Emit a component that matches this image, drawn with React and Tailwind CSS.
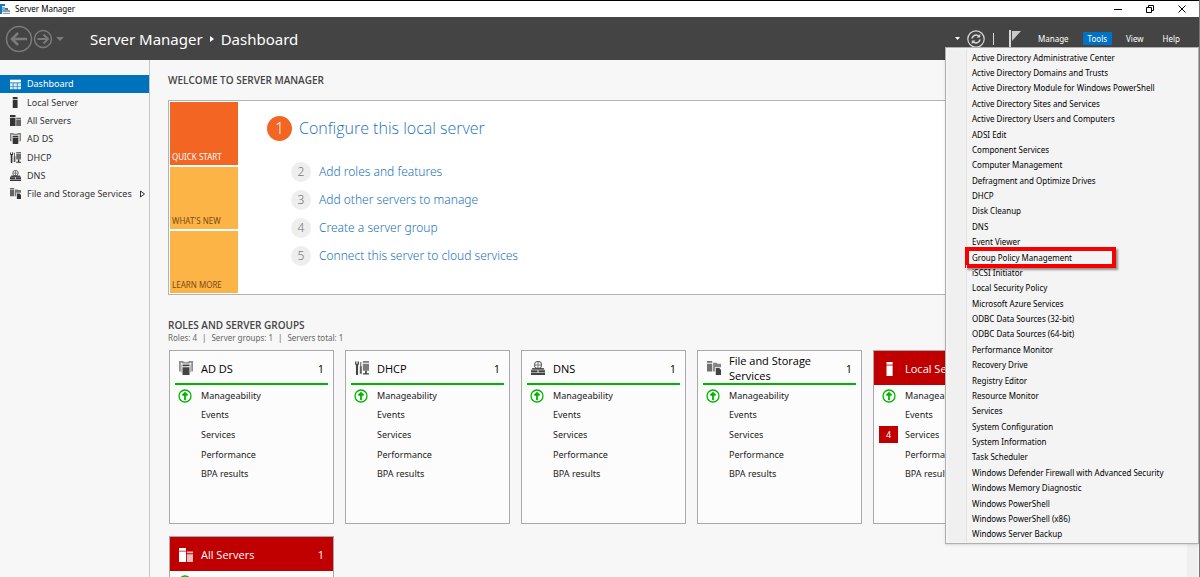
import React from "react";

const tools = [
  "Active Directory Administrative Center",
  "Active Directory Domains and Trusts",
  "Active Directory Module for Windows PowerShell",
  "Active Directory Sites and Services",
  "Active Directory Users and Computers",
  "ADSI Edit",
  "Component Services",
  "Computer Management",
  "Defragment and Optimize Drives",
  "DHCP",
  "Disk Cleanup",
  "DNS",
  "Event Viewer",
  "Group Policy Management",
  "iSCSI Initiator",
  "Local Security Policy",
  "Microsoft Azure Services",
  "ODBC Data Sources (32-bit)",
  "ODBC Data Sources (64-bit)",
  "Performance Monitor",
  "Recovery Drive",
  "Registry Editor",
  "Resource Monitor",
  "Services",
  "System Configuration",
  "System Information",
  "Task Scheduler",
  "Windows Defender Firewall with Advanced Security",
  "Windows Memory Diagnostic",
  "Windows PowerShell",
  "Windows PowerShell (x86)",
  "Windows Server Backup",
];

const shapes = {
  dashboard: (
    <>
      <path d="M0 1h16v4H0z" />
      <path d="M0 6h4v4H0zM5 6h5v4H5zM11 6h5v4h-5zM0 11h4v4H0zM5 11h5v4H5zM11 11h5v4h-5z" opacity=".85" />
    </>
  ),
  server: (
    <>
      <path d="M4 0h7v3H4z" />
      <path d="M4 4h7v12H4z" />
    </>
  ),
  servers: (
    <>
      <path d="M0 0h8v3H0zM0 4h8v12H0z" />
      <path d="M9 4h7v2H9zM9 7h7v9H9z" opacity=".75" />
    </>
  ),
  adds: (
    <>
      <path d="M0 0h5v2H2v10H0zM16 0h-5v2h3v10h2z" opacity=".6" />
      <path d="M2.500 4h1v9h-1zM12.500 4h1v9h-1z" opacity=".4" />
      <path d="M4 1h8v2H4z" opacity=".55" />
      <path d="M4 4h8v2H4zM4 7h8v9H4z" />
    </>
  ),
  dhcp: (
    <>
      <path d="M1.500 0v3h1.500V0C4.500.5 5 2 4.500 3.500L3.500 5v10a1.200 1.200 0 0 1-2.400 0V5L.2 3.500C-.3 2 .2.5 1.500 0z" />
      <path d="M6 1h1.200v5h.6v8.500H5.500V6H6z" opacity=".85" />
      <path d="M9 0h7v2H9zM9 3h7v8H9z" opacity=".7" />
      <path d="M11.500 11h2v3H16v1.500H9V14h2.500z" />
    </>
  ),
  dns: (
    <>
      <circle cx="8" cy="4.500" r="4" fill="none" stroke="currentColor" strokeWidth="1.300" opacity=".8" />
      <path d="M4.500 4h7v1h-7zM7.400 1h1.200v7H7.400z" opacity=".7" />
      <path d="M1.500 8h13l1 2H.5z" opacity=".9" />
      <path d="M0 10.500h7.500V13H0zM8.500 10.500H16V13H8.500zM0 13.700h16V16H0z" />
    </>
  ),
  files: (
    <>
      <path d="M0 0h6v2H0zM0 3h6v9H0z" opacity=".75" />
      <path d="M7 2h4l1 1h4v4H9v5H7z" opacity=".65" />
      <path d="M10 8h4l2 2v6h-6z" />
    </>
  ),
};

function Icon({ name, className }) {
  return (
    <svg viewBox="0 0 16 16" fill="currentColor" aria-hidden="true" className={"shrink-0 " + className}>
      {shapes[name]}
    </svg>
  );
}

const nav = [
  ["Dashboard", "dashboard"],
  ["Local Server", "server"],
  ["All Servers", "servers"],
  ["AD DS", "adds"],
  ["DHCP", "dhcp"],
  ["DNS", "dns"],
  ["File and Storage Services", "files"],
];

const cards = [
  { title: "AD DS", icon: "adds" },
  { title: "DHCP", icon: "dhcp" },
  { title: "DNS", icon: "dns" },
  { title: "File and Storage Services", icon: "files" },
  { title: "Local Server", icon: "server", alert: 4 },
  { title: "All Servers", icon: "servers", alert: 4 },
];

function TitleBar() {
  return (
    <div className="flex h-[17px] shrink-0 items-center border-t border-black bg-white text-black">
      <svg viewBox="0 0 11 11" className="size-[11px]" aria-hidden="true">
        <path d="M0 0h5v2H2v8H0z" fill="#1779ba" />
        <path d="M2 3h3v5H2z" fill="#7fb7dc" />
        <path d="M3 6h7v4H3z" fill="#8d9fae" />
        <path d="M5 4h3v2H5z" fill="#5c7488" />
        <path d="M3 8h7v1H3z" fill="#e6edf2" />
      </svg>
      <span className="ml-1 flex-1 text-[8px] leading-4">Server Manager</span>
      <div className="mr-[13px] flex items-center gap-6">
        <button aria-label="Minimize">
          <svg viewBox="0 0 8 8" className="size-2" stroke="#000" fill="none"><path d="M0 4.500h8" /></svg>
        </button>
        <button aria-label="Restore">
          <svg viewBox="0 0 8 8" className="size-2" stroke="#000" fill="none"><path d="M.5 2.500h5v5h-5zM2.500 2.500v-2h5v5h-2" /></svg>
        </button>
        <button aria-label="Close">
          <svg viewBox="0 0 8 8" className="size-2" stroke="#000" fill="none"><path d="M.5.5l7 7M7.500.5l-7 7" /></svg>
        </button>
      </div>
    </div>
  );
}

function Header() {
  return (
    <header className="flex h-[43px] shrink-0 items-center bg-[#444444] text-white">
      <button aria-label="Back" className="ml-[5px]">
        <svg viewBox="0 0 28 28" className="size-7" fill="none" stroke="#7b7b7b" strokeWidth="2">
          <circle cx="14" cy="14" r="12.500" strokeWidth="1.500" />
          <path d="M22 14H7M13 8l-6 6 6 6" strokeWidth="2.500" />
        </svg>
      </button>
      <button aria-label="Forward">
        <svg viewBox="0 0 20 20" className="size-5" fill="none" stroke="#7b7b7b" strokeWidth="2">
          <circle cx="10" cy="10" r="8.500" strokeWidth="1.500" />
          <path d="M4.500 10h10M10.500 5.500L15 10l-4.500 4.500" />
        </svg>
      </button>
      <button aria-label="History" className="ml-[3px]">
        <svg viewBox="0 0 8 4" className="h-1 w-2" fill="#7b7b7b"><path d="M0 0h8L4 4z" /></svg>
      </button>
      <nav aria-label="Breadcrumb" className="ml-[26px] flex flex-1 items-center gap-[7px] text-[15px] leading-5">
        <a href="#root">Server Manager</a>
        <svg viewBox="0 0 4 6" className="h-[6px] w-1" fill="#fff" aria-hidden="true"><path d="M0 0l4 3-4 3z" /></svg>
        <a href="#dashboard">Dashboard</a>
      </nav>
      <button aria-label="Refresh options">
        <svg viewBox="0 0 5 3" className="h-[3px] w-[5px]" fill="#fff"><path d="M0 0h5L2.500 3z" /></svg>
      </button>
      <button aria-label="Refresh" className="ml-[7px]">
        <svg viewBox="0 0 18 18" className="size-[18px]" fill="none" stroke="#d8d8d8">
          <circle cx="9" cy="9" r="8.200" strokeWidth="1.200" />
          <path d="M5 8.500A4 4 0 0 1 12 6.500M13 9.500A4 4 0 0 1 6 11.500" strokeWidth="1.600" />
          <path d="M13.200 4v3.600H9.600zM4.800 14v-3.600h3.600z" fill="#d8d8d8" stroke="none" />
        </svg>
      </button>
      <span className="ml-2 h-3 w-px bg-[#d8d8d8]" />
      <button aria-label="Notifications" className="ml-[15px]">
        <svg viewBox="0 0 12 18" className="h-[18px] w-3" fill="#d8d8d8"><path d="M0 0h2v18H0z" /><path d="M3 1h9L3 11z" opacity=".9" /></svg>
      </button>
      <div className="mr-[14px] ml-3 flex items-center gap-[9px] text-[8px] leading-3">
        <button className="px-[5px]">Manage</button>
        <button className="h-[13px] bg-[#0072c6] px-[5px]">Tools</button>
        <button className="px-[5px]">View</button>
        <button className="px-[5px]">Help</button>
      </div>
    </header>
  );
}

function Sidebar() {
  return (
    <nav aria-label="Servers" className="w-[150px] shrink-0 border-r border-[#c3c3c3] pt-[15px] text-[9px] text-[#333333]">
      <div className="grid h-[128px] auto-rows-fr">
        {nav.map(([label, icon], i) => (
          <a
            key={label}
            href="#dashboard"
            className={i === 0 ? "flex items-center bg-[#0072bc] pl-[10px] text-white" : "flex items-center pl-[10px]"}
          >
            <Icon name={icon} className="size-[11px]" />
            <span className="ml-[6px] flex-1 whitespace-nowrap">{label}</span>
            {icon === "files" && (
              <svg viewBox="0 0 5 8" className="mr-1 h-2 w-[5px]" fill="none" stroke="#333" aria-hidden="true"><path d="M.5 1L4.500 4 .5 7z" /></svg>
            )}
          </a>
        ))}
      </div>
    </nav>
  );
}

function Welcome() {
  return (
    <section className="flex border border-[#b0b4b8] bg-white p-px">
      <div className="flex w-[68px] flex-col gap-[2px] text-[8px] leading-3 text-[#7a4a10]">
        <button className="flex h-[63px] items-end bg-[#f26522] px-[2px] pb-[2px] text-white">QUICK START</button>
        <button className="flex h-[62px] items-end bg-[#fdb447] px-[2px] pb-[2px]">WHAT'S NEW</button>
        <button className="flex h-[62px] items-end bg-[#fdb447] px-[2px] pb-[2px]">LEARN MORE</button>
      </div>
      <div className="pt-[14px] pl-[29px] font-light text-[#1c73b9]">
        <a href="#configure" className="flex items-center gap-[7px] font-['Open_Sans',sans-serif] text-[16px] leading-[25px]">
          <span className="flex size-[25px] items-center justify-center rounded-full bg-[#f26522] text-white">1</span>
          Configure this local server
        </a>
        <ol className="mt-[21px] ml-6 flex flex-col gap-2 text-[12px] leading-5">
          {["Add roles and features", "Add other servers to manage", "Create a server group", "Connect this server to cloud services"].map((t, i) => (
            <li key={t}>
              <a href="#step" className="flex items-center gap-2">
                <span className="flex size-5 items-center justify-center rounded-full bg-[#eeeeee] text-[#777777]">{i + 2}</span>
                {t}
              </a>
            </li>
          ))}
        </ol>
      </div>
    </section>
  );
}

function Card({ title, icon, alert }) {
  return (
    <article className="flex h-[174px] w-[165px] flex-col border border-[#a9a9a9] bg-[#fcfcfc]">
      <div
        className={
          alert
            ? "flex h-[34px] shrink-0 bg-[#c00000] px-[5px] text-white"
            : "flex h-[34px] shrink-0 px-[5px] text-black"
        }
      >
        <div
          className={
            alert
              ? "flex flex-1 items-center px-1 pt-px font-['Open_Sans',sans-serif] text-[11px] leading-[15px]"
              : "flex flex-1 items-center border-b-2 border-[#00b400] px-1 pt-[2px] font-['Open_Sans',sans-serif] text-[11px] leading-[15px]"
          }
        >
          <Icon name={icon} className={alert ? "size-[14px]" : "size-[14px] text-[#444444]"} />
          <h3 className="mr-3 ml-2 flex-1">{title}</h3>
          <span>1</span>
        </div>
      </div>
      <ul className="mt-px grid h-[98px] auto-rows-fr pl-[5px] text-[9px] leading-4 text-[#222222]">
        {["Manageability", "Events", "Services", "Performance", "BPA results"].map((row) => (
          <li key={row} className="flex items-center">
            <span className="mr-[7px] flex w-[19px] justify-center">
              {row === "Manageability" && (
                <svg viewBox="0 0 14 14" className="size-[14px]" fill="none" stroke="#00b400" aria-hidden="true">
                  <circle cx="7" cy="7" r="6" strokeWidth="1.300" />
                  <path d="M7 11V4.500M4.500 6.500L7 4l2.500 2.500" strokeWidth="1.800" />
                </svg>
              )}
              {row === "Services" && alert && (
                <span className="flex h-[17px] w-[19px] items-center justify-center bg-[#c00000] text-white">{alert}</span>
              )}
            </span>
            <a href="#detail">{row}</a>
          </li>
        ))}
      </ul>
    </article>
  );
}

function ToolsMenu() {
  return (
    <div className="absolute top-[47px] right-0 w-[254px] border border-[#b0b0b0] bg-[#f4f4f4] px-[2px] pt-[2px] pb-px shadow-sm">
      <ul role="menu" className="grid h-[492px] auto-rows-fr border-l-[18px] border-[#f0f0f0] text-[8px] leading-3 text-black">
        {tools.map((t) => (
          <li key={t} role="none" className="relative flex items-center border-l border-[#e2e2e2] pl-[5px]">
            <button role="menuitem" className="whitespace-nowrap">{t}</button>
            {t === "Group Policy Management" && (
              <span className="pointer-events-none absolute -top-[3px] -left-[2px] h-[21px] w-[151px] border-4 border-[#f80000] shadow-[2px_2px_2px_rgba(0,0,0,0.4)]" />
            )}
          </li>
        ))}
      </ul>
    </div>
  );
}

export default function App() {
  return (
    <div className="relative flex h-screen flex-col overflow-hidden border-r border-[#777777] bg-[#f7f7f7] font-['Noto_Sans','Open_Sans',sans-serif]">
      <TitleBar />
      <Header />
      <div className="flex min-h-0 flex-1">
        <Sidebar />
        <main className="min-w-0 flex-1 overflow-hidden pl-[18px]">
          <h1 className="mt-[14px] font-['Open_Sans',sans-serif] text-[10px] leading-3 font-semibold text-[#444444]">WELCOME TO SERVER MANAGER</h1>
          <div className="mt-[14px]">
            <Welcome />
          </div>
          <h2 className="mt-6 font-['Open_Sans',sans-serif] text-[10px] leading-3 font-semibold text-[#444444]">ROLES AND SERVER GROUPS</h2>
          <p className="flex gap-[5px] text-[8px] leading-[14px] text-[#666666]">
            <span>Roles: 4</span>
            <span>|</span>
            <span>Server groups: 1</span>
            <span>|</span>
            <span>Servers total: 1</span>
          </p>
          <div className="mt-[5px] ml-px flex flex-wrap gap-x-[11px] gap-y-3">
            {cards.map((c) => (
              <Card key={c.title} {...c} />
            ))}
          </div>
        </main>
        <div className="mr-px w-[11px] shrink-0 bg-[#efefef]" />
      </div>
      <ToolsMenu />
    </div>
  );
}
